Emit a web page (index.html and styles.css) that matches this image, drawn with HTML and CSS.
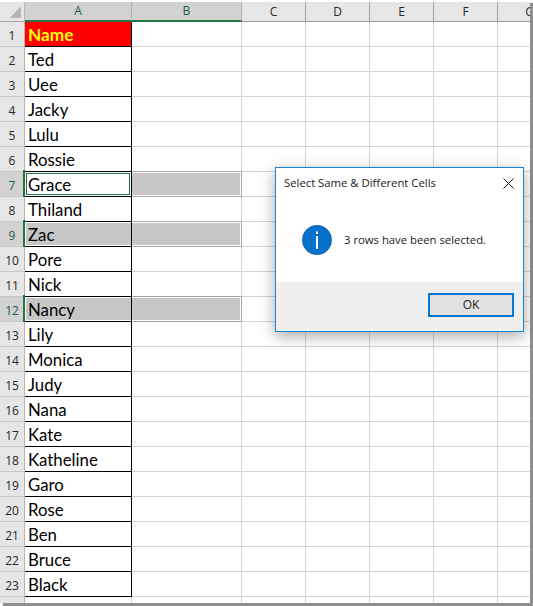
FILE: index.html
```html
<!DOCTYPE html>
<html lang="en">
<head>
<meta charset="utf-8">
<title>Select Same &amp; Different Cells</title>
<link rel="stylesheet" href="styles.css">
</head>
<body>
<div class="frame">
  <div class="sheet">
    <div class="corner"><svg class="corner-mark" width="11" height="12" viewBox="0 0 11 12"><path d="M11 0V12H0Z" fill="#b4b4b4"/></svg></div>
    <div class="ch ch-sel">A</div><div class="ch ch-sel">B</div><div class="ch">C</div><div class="ch">D</div><div class="ch">E</div><div class="ch">F</div><div class="ch">G</div>

    <div class="rh">1</div><div class="a name">Name</div><div class="c"></div><div class="c"></div><div class="c"></div><div class="c"></div><div class="c"></div><div class="c"></div>
    <div class="rh">2</div><div class="a">Ted</div><div class="c"></div><div class="c"></div><div class="c"></div><div class="c"></div><div class="c"></div><div class="c"></div>
    <div class="rh">3</div><div class="a">Uee</div><div class="c"></div><div class="c"></div><div class="c"></div><div class="c"></div><div class="c"></div><div class="c"></div>
    <div class="rh">4</div><div class="a">Jacky</div><div class="c"></div><div class="c"></div><div class="c"></div><div class="c"></div><div class="c"></div><div class="c"></div>
    <div class="rh">5</div><div class="a">Lulu</div><div class="c"></div><div class="c"></div><div class="c"></div><div class="c"></div><div class="c"></div><div class="c"></div>
    <div class="rh">6</div><div class="a">Rossie</div><div class="c above"></div><div class="c"></div><div class="c"></div><div class="c"></div><div class="c"></div><div class="c"></div>
    <div class="rh rh-sel">7</div><div class="a active">Grace</div><div class="c sel"></div><div class="c"></div><div class="c"></div><div class="c"></div><div class="c"></div><div class="c"></div>
    <div class="rh">8</div><div class="a">Thiland</div><div class="c above"></div><div class="c"></div><div class="c"></div><div class="c"></div><div class="c"></div><div class="c"></div>
    <div class="rh rh-sel">9</div><div class="a sel sel-a">Zac</div><div class="c sel"></div><div class="c"></div><div class="c"></div><div class="c"></div><div class="c"></div><div class="c"></div>
    <div class="rh">10</div><div class="a">Pore</div><div class="c"></div><div class="c"></div><div class="c"></div><div class="c"></div><div class="c"></div><div class="c"></div>
    <div class="rh">11</div><div class="a">Nick</div><div class="c above"></div><div class="c"></div><div class="c"></div><div class="c"></div><div class="c"></div><div class="c"></div>
    <div class="rh rh-sel">12</div><div class="a sel sel-a">Nancy</div><div class="c sel"></div><div class="c"></div><div class="c"></div><div class="c"></div><div class="c"></div><div class="c"></div>
    <div class="rh">13</div><div class="a">Lily</div><div class="c"></div><div class="c"></div><div class="c"></div><div class="c"></div><div class="c"></div><div class="c"></div>
    <div class="rh">14</div><div class="a">Monica</div><div class="c"></div><div class="c"></div><div class="c"></div><div class="c"></div><div class="c"></div><div class="c"></div>
    <div class="rh">15</div><div class="a">Judy</div><div class="c"></div><div class="c"></div><div class="c"></div><div class="c"></div><div class="c"></div><div class="c"></div>
    <div class="rh">16</div><div class="a">Nana</div><div class="c"></div><div class="c"></div><div class="c"></div><div class="c"></div><div class="c"></div><div class="c"></div>
    <div class="rh">17</div><div class="a">Kate</div><div class="c"></div><div class="c"></div><div class="c"></div><div class="c"></div><div class="c"></div><div class="c"></div>
    <div class="rh">18</div><div class="a">Katheline</div><div class="c"></div><div class="c"></div><div class="c"></div><div class="c"></div><div class="c"></div><div class="c"></div>
    <div class="rh">19</div><div class="a">Garo</div><div class="c"></div><div class="c"></div><div class="c"></div><div class="c"></div><div class="c"></div><div class="c"></div>
    <div class="rh">20</div><div class="a">Rose</div><div class="c"></div><div class="c"></div><div class="c"></div><div class="c"></div><div class="c"></div><div class="c"></div>
    <div class="rh">21</div><div class="a">Ben</div><div class="c"></div><div class="c"></div><div class="c"></div><div class="c"></div><div class="c"></div><div class="c"></div>
    <div class="rh">22</div><div class="a">Bruce</div><div class="c"></div><div class="c"></div><div class="c"></div><div class="c"></div><div class="c"></div><div class="c"></div>
    <div class="rh">23</div><div class="a">Black</div><div class="c"></div><div class="c"></div><div class="c"></div><div class="c"></div><div class="c"></div><div class="c"></div>
    <div class="rh"></div><div class="c blank-a"></div><div class="c"></div><div class="c"></div><div class="c"></div><div class="c"></div><div class="c"></div><div class="c"></div>
  </div>

  <div class="dialog" role="dialog">
    <div class="dialog-title">
      <span>Select Same &amp; Different Cells</span>
      <svg class="close" width="11" height="11" viewBox="0 0 11 11"><path d="M.5.5l10 10M10.500.5l-10 10" stroke="#1a1a1a" stroke-width="1" fill="none"/></svg>
    </div>
    <div class="dialog-body">
      <svg class="info" width="30" height="30" viewBox="0 0 30 30"><circle cx="15" cy="15" r="14.700" fill="#0472cb" stroke="#1a5e9c" stroke-width=".6"/><rect x="14" y="6.500" width="2" height="2.500" fill="#fff"/><rect x="14" y="11" width="2" height="13" fill="#fff"/></svg>
      <span>3 rows have been selected.</span>
    </div>
    <div class="dialog-foot"><button class="ok" type="button">OK</button></div>
  </div>
</div>
</body>
</html>
```
FILE: styles.css
```css
* { box-sizing: border-box; }
html, body { margin: 0; padding: 0; background: #fff; }
body { width: 533px; height: 606px; overflow: hidden; }
.frame { position: relative; width: 530px; height: 603px; padding-top: 2px; background: #fff; box-shadow: 3px 3px 1px #8f8f8f; }
.sheet {
  display: grid;
  grid-template-columns: 25px 107px 110px 64px 64px 64px 64px 64px;
  grid-template-rows: 20px repeat(24, 25px);
  width: 530px;
  height: 601px;
  overflow: hidden;
  background: #fff;
}
.corner { position: relative; background: #e6e6e6; border-right: 1px solid #b5b5b5; border-bottom: 1px solid #a6a6a6; }
.corner-mark { position: absolute; left: 10px; top: 4px; }
.ch {
  display: flex; align-items: center; justify-content: center;
  background: #e6e6e6;
  border-right: 1px solid #a0a0a0;
  border-bottom: 1px solid #9c9c9c;
  font: 12px/1 "Open Sans", sans-serif;
  color: #262626;
}
.ch-sel { background: #d2d2d2; color: #1e5c3f; border-right-color: #b0b0b0; border-bottom: 2px solid #217346; }
.rh {
  display: flex; align-items: center; justify-content: center;
  padding-top: 3px;
  background: #e6e6e6;
  border-right: 1px solid #b5b5b5;
  border-bottom: 1px solid #c8c8c8;
  font: 12px/1 "Open Sans", sans-serif;
  color: #262626;
}
.rh-sel { position: relative; background: #d2d2d2; color: #1e5c3f; }
.rh-sel::after { content: ""; position: absolute; right: -1px; top: -2px; bottom: -1px; width: 2px; background: #217346; }
.c { background: #fff; border-right: 1px solid #d4d4d4; border-bottom: 1px solid #d4d4d4; }
.a {
  display: flex; align-items: flex-end;
  padding: 0 0 0 3px;
  background: #fff;
  border-right: 1px solid #000;
  border-bottom: 1px solid #000;
  font: 16.8px/22px Lato, sans-serif;
  color: #000;
}
.name { background: #f00; color: #ff0; font-weight: 700; font-size: 17.2px; }
.blank-a { border-right-color: #d4d4d4; }
.above { border-bottom-color: #a6a6a6; }
.sel { background: #c6c6c6; border-right-color: #a6a6a6; border-bottom-color: #a6a6a6; box-shadow: inset 0 1px #fff, inset 0 -1px #fff, inset -1px 0 #fff; }
.sel-a { border-right-color: #000; border-bottom-color: #000; box-shadow: inset 0 1px #fff, inset 0 -1px #fff, inset 1px 0 #fff; }
.active { position: relative; }
.active::after { content: ""; position: absolute; inset: 1px; border: 1px solid #217346; }
.dialog {
  position: absolute; left: 275px; top: 167px;
  display: flex; flex-direction: column;
  width: 249px; height: 165px;
  background: #fff;
  border: 1px solid #1883d7;
  box-shadow: 0 4px 14px rgba(0,0,0,.35);
  font: 11.3px/16px "Open Sans", sans-serif;
  color: #1a1a1a;
}
.dialog-title { display: flex; align-items: center; justify-content: space-between; height: 30px; padding: 0 9px 0 8px; }
.dialog-body { display: flex; align-items: center; gap: 12px; height: 84px; padding: 0 0 0 26px; }
.dialog-foot { flex: 1; display: flex; align-items: center; justify-content: flex-end; padding: 0 9px 3px 0; background: #efefef; }
.ok { width: 86px; height: 24px; padding: 0; background: #e1e1e1; border: 2px solid #0078d7; font: 12px/1 "Open Sans", sans-serif; color: #1a1a1a; }
```
